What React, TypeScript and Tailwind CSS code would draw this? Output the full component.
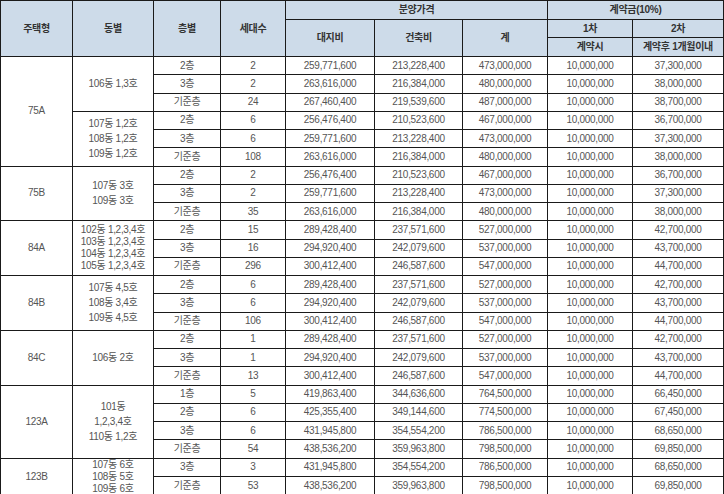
type Row = {
  type?: { label: string; span: number };
  dong?: { lines: string[]; span: number; tight?: boolean };
  floor: string;
  units: string;
  land: string;
  build: string;
  total: string;
  first: string;
  second: string;
};

const rows: Row[] = [
  { type: { label: "75A", span: 6 }, dong: { lines: ["106동 1,3호"], span: 3 }, floor: "2층", units: "2", land: "259,771,600", build: "213,228,400", total: "473,000,000", first: "10,000,000", second: "37,300,000" },
  { floor: "3층", units: "2", land: "263,616,000", build: "216,384,000", total: "480,000,000", first: "10,000,000", second: "38,000,000" },
  { floor: "기준층", units: "24", land: "267,460,400", build: "219,539,600", total: "487,000,000", first: "10,000,000", second: "38,700,000" },
  { dong: { lines: ["107동 1,2호", "108동 1,2호", "109동 1,2호"], span: 3 }, floor: "2층", units: "6", land: "256,476,400", build: "210,523,600", total: "467,000,000", first: "10,000,000", second: "36,700,000" },
  { floor: "3층", units: "6", land: "259,771,600", build: "213,228,400", total: "473,000,000", first: "10,000,000", second: "37,300,000" },
  { floor: "기준층", units: "108", land: "263,616,000", build: "216,384,000", total: "480,000,000", first: "10,000,000", second: "38,000,000" },

  { type: { label: "75B", span: 3 }, dong: { lines: ["107동 3호", "109동 3호"], span: 3 }, floor: "2층", units: "2", land: "256,476,400", build: "210,523,600", total: "467,000,000", first: "10,000,000", second: "36,700,000" },
  { floor: "3층", units: "2", land: "259,771,600", build: "213,228,400", total: "473,000,000", first: "10,000,000", second: "37,300,000" },
  { floor: "기준층", units: "35", land: "263,616,000", build: "216,384,000", total: "480,000,000", first: "10,000,000", second: "38,000,000" },

  { type: { label: "84A", span: 3 }, dong: { lines: ["102동 1,2,3,4호", "103동 1,2,3,4호", "104동 1,2,3,4호", "105동 1,2,3,4호"], span: 3, tight: true }, floor: "2층", units: "15", land: "289,428,400", build: "237,571,600", total: "527,000,000", first: "10,000,000", second: "42,700,000" },
  { floor: "3층", units: "16", land: "294,920,400", build: "242,079,600", total: "537,000,000", first: "10,000,000", second: "43,700,000" },
  { floor: "기준층", units: "296", land: "300,412,400", build: "246,587,600", total: "547,000,000", first: "10,000,000", second: "44,700,000" },

  { type: { label: "84B", span: 3 }, dong: { lines: ["107동 4,5호", "108동 3,4호", "109동 4,5호"], span: 3 }, floor: "2층", units: "6", land: "289,428,400", build: "237,571,600", total: "527,000,000", first: "10,000,000", second: "42,700,000" },
  { floor: "3층", units: "6", land: "294,920,400", build: "242,079,600", total: "537,000,000", first: "10,000,000", second: "43,700,000" },
  { floor: "기준층", units: "106", land: "300,412,400", build: "246,587,600", total: "547,000,000", first: "10,000,000", second: "44,700,000" },

  { type: { label: "84C", span: 3 }, dong: { lines: ["106동 2호"], span: 3 }, floor: "2층", units: "1", land: "289,428,400", build: "237,571,600", total: "527,000,000", first: "10,000,000", second: "42,700,000" },
  { floor: "3층", units: "1", land: "294,920,400", build: "242,079,600", total: "537,000,000", first: "10,000,000", second: "43,700,000" },
  { floor: "기준층", units: "13", land: "300,412,400", build: "246,587,600", total: "547,000,000", first: "10,000,000", second: "44,700,000" },

  { type: { label: "123A", span: 4 }, dong: { lines: ["101동", "1,2,3,4호", "110동 1,2호"], span: 4 }, floor: "1층", units: "5", land: "419,863,400", build: "344,636,600", total: "764,500,000", first: "10,000,000", second: "66,450,000" },
  { floor: "2층", units: "6", land: "425,355,400", build: "349,144,600", total: "774,500,000", first: "10,000,000", second: "67,450,000" },
  { floor: "3층", units: "6", land: "431,945,800", build: "354,554,200", total: "786,500,000", first: "10,000,000", second: "68,650,000" },
  { floor: "기준층", units: "54", land: "438,536,200", build: "359,963,800", total: "798,500,000", first: "10,000,000", second: "69,850,000" },

  { type: { label: "123B", span: 2 }, dong: { lines: ["107동 6호", "108동 5호", "109동 6호"], span: 2, tight: true }, floor: "3층", units: "3", land: "431,945,800", build: "354,554,200", total: "786,500,000", first: "10,000,000", second: "68,650,000" },
  { floor: "기준층", units: "53", land: "438,536,200", build: "359,963,800", total: "798,500,000", first: "10,000,000", second: "69,850,000" },
];

const th = "border border-[#1a1a1a] bg-[#cddbe9] p-0 text-center align-middle font-bold text-[#333]";
const td = "border border-[#1a1a1a] p-0 text-center align-middle";

export default function App() {
  return (
    <div
      className="h-[494px] w-[724px] overflow-hidden bg-white text-[10px] tracking-[-0.3px] text-[#555]"
      style={{ fontFamily: '"Liberation Sans", "Noto Sans CJK KR", sans-serif' }}
    >
      <table className="w-[723px] table-fixed border-collapse leading-none">
        <colgroup>
          <col className="w-[72px]" />
          <col className="w-[81px]" />
          <col className="w-[67px]" />
          <col className="w-[65px]" />
          <col className="w-[89px]" />
          <col className="w-[88px]" />
          <col className="w-[85px]" />
          <col className="w-[85px]" />
          <col className="w-[91px]" />
        </colgroup>
        <thead>
          <tr className="h-[19px]">
            <th rowSpan={3} className={th}>주택형</th>
            <th rowSpan={3} className={th}>동별</th>
            <th rowSpan={3} className={th}>층별</th>
            <th rowSpan={3} className={th}>세대수</th>
            <th colSpan={3} className={th}>분양가격</th>
            <th colSpan={2} className={th}>계약금(10%)</th>
          </tr>
          <tr className="h-[18px]">
            <th rowSpan={2} className={th}>대지비</th>
            <th rowSpan={2} className={th}>건축비</th>
            <th rowSpan={2} className={th}>계</th>
            <th className={th}>1차</th>
            <th className={th}>2차</th>
          </tr>
          <tr className="h-[19px]">
            <th className={th}>계약시</th>
            <th className={th}>계약후 1개월이내</th>
          </tr>
        </thead>
        <tbody>
          {rows.map((r, i) => (
            <tr key={i} className="h-[18.25px]">
              {r.type && (
                <td rowSpan={r.type.span} className={td}>
                  {r.type.label}
                </td>
              )}
              {r.dong && (
                <td
                  rowSpan={r.dong.span}
                  className={`${td} ${r.dong.tight ? "leading-[12px]" : "leading-[15px]"}`}
                >
                  {r.dong.lines.map((l) => (
                    <div key={l}>{l}</div>
                  ))}
                </td>
              )}
              <td className={td}>{r.floor}</td>
              <td className={td}>{r.units}</td>
              <td className={td}>{r.land}</td>
              <td className={td}>{r.build}</td>
              <td className={td}>{r.total}</td>
              <td className={td}>{r.first}</td>
              <td className={td}>{r.second}</td>
            </tr>
          ))}
        </tbody>
      </table>
    </div>
  );
}
